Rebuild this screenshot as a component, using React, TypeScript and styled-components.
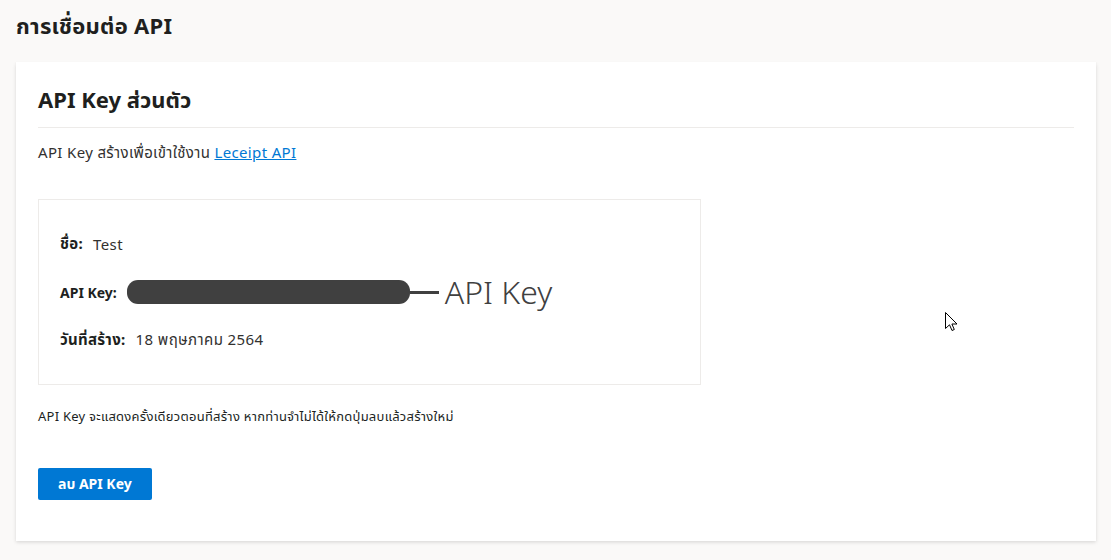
import React from 'react';
import styled, { createGlobalStyle } from 'styled-components';

const GlobalStyle = createGlobalStyle`
  html, body {
    margin: 0;
    padding: 0;
    background: #faf9f8;
  }
  body {
    font-family: 'Noto Sans', 'Noto Sans Thai', 'Liberation Sans', sans-serif;
    color: #323130;
  }
  * { box-sizing: border-box; }
`;

const Page = styled.div`
  width: 1111px;
  height: 560px;
  padding: 0 15px 0 16px;
  position: relative;
  overflow: hidden;
`;

const PageTitle = styled.h1`
  margin: 0;
  padding-top: 10px;
  height: 62px;
  font-size: 22px;
  line-height: 30px;
  font-weight: 700;
  letter-spacing: 0.3px;
  color: #201f1e;
`;

const Card = styled.section`
  background: #ffffff;
  padding: 22px 22px 41px 22px;
  box-shadow: 0 1.6px 3.6px rgba(0, 0, 0, 0.132), 0 0.3px 0.9px rgba(0, 0, 0, 0.108);
`;

const CardTitle = styled.h2`
  margin: 0;
  padding-bottom: 13px;
  border-bottom: 1px solid #edebe9;
  font-size: 22px;
  line-height: 30px;
  font-weight: 700;
  color: #201f1e;
`;

const Description = styled.p`
  margin: 14px 0 0 0;
  font-size: 15px;
  line-height: 20px;
  letter-spacing: 0.35px;

  a {
    color: #0078d4;
    text-decoration: underline;
  }
`;

const InfoBox = styled.div`
  width: 663px;
  margin-top: 37px;
  padding: 20px 21px;
  border: 1px solid #edebe9;
`;

const Row = styled.div`
  display: flex;
  align-items: center;
  gap: 10px;
  height: 48px;
  font-size: 14px;
`;

const Label = styled.span<{ $thai?: boolean }>`
  font-weight: 700;
  font-size: ${(p) => (p.$thai ? '15px' : '14px')};
  letter-spacing: ${(p) => (p.$thai ? '0.3px' : '0')};
  color: #201f1e;
`;

const Value = styled.span`
  font-size: 15px;
  letter-spacing: 0.4px;
  color: #323130;
`;

const KeyMask = styled.div`
  display: flex;
  align-items: center;
`;

const KeyBar = styled.span`
  display: block;
  width: 283px;
  height: 24px;
  border-radius: 11px;
  background: #404040;
`;

const KeyLine = styled.span`
  display: block;
  width: 29px;
  height: 3px;
  background: #404040;
`;

const KeyCaption = styled.span`
  margin-left: 6px;
  font-size: 32px;
  line-height: 38px;
  font-weight: 300;
  color: #404040;
`;

const Note = styled.p`
  margin: 21px 0 0 0;
  font-size: 13px;
  line-height: 20px;
  letter-spacing: 0.25px;
  color: #201f1e;
`;

const DeleteButton = styled.button`
  margin-top: 42px;
  height: 32px;
  padding: 0 20px;
  min-width: 113px;
  border: none;
  border-radius: 2px;
  background: #0078d4;
  color: #ffffff;
  font-family: inherit;
  font-size: 14px;
  font-weight: 700;
  cursor: pointer;
`;

const Cursor = styled.svg`
  position: absolute;
  left: 945px;
  top: 312px;
`;

export default function App() {
  return (
    <Page>
      <GlobalStyle />
      <PageTitle>การเชื่อมต่อ API</PageTitle>
      <Card>
        <CardTitle>API Key ส่วนตัว</CardTitle>
        <Description>
          API Key สร้างเพื่อเข้าใช้งาน <a href="#">Leceipt API</a>
        </Description>
        <InfoBox>
          <Row>
            <Label $thai>ชื่อ:</Label>
            <Value>Test</Value>
          </Row>
          <Row>
            <Label>API Key:</Label>
            <KeyMask>
              <KeyBar />
              <KeyLine />
              <KeyCaption>API Key</KeyCaption>
            </KeyMask>
          </Row>
          <Row>
            <Label $thai>วันที่สร้าง:</Label>
            <Value>18 พฤษภาคม 2564</Value>
          </Row>
        </InfoBox>
        <Note>API Key จะแสดงครั้งเดียวตอนที่สร้าง หากท่านจำไม่ได้ให้กดปุ่มลบแล้วสร้างใหม่</Note>
        <DeleteButton>ลบ API Key</DeleteButton>
      </Card>
      <Cursor width="13" height="20" viewBox="0 0 13 20">
        <path d="M0.5 0.5 L0.5 16.5 L4.5 12.8 L7 18.5 L9.3 17.5 L6.9 12 L12 12 Z" fill="#ffffff" stroke="#000000" strokeWidth="1" strokeLinejoin="miter" />
      </Cursor>
    </Page>
  );
}
